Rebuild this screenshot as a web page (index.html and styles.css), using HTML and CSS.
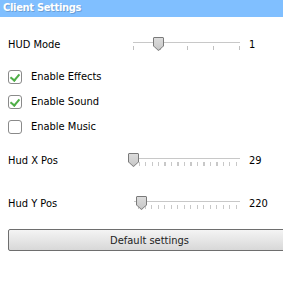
FILE: index.html
```html
<!DOCTYPE html>
<html lang="en">
<head>
    <meta charset="UTF-8">
    <title>Client Settings</title>
    <link rel="stylesheet" href="styles.css">
</head>
<body>
    <div id="window">
        <header class="titleBar">Client Settings</header>

        <main class="panel">
            <div class="sliderRow hudMode">
                <span class="label">HUD Mode</span>
                <div class="slider coarse">
                    <div class="track"></div>
                    <div class="ticks"></div>
                    <div class="thumb" style="left: 20px"></div>
                </div>
                <span class="value">1</span>
            </div>

            <label class="checkRow">
                <span class="box checked"></span>
                <span>Enable Effects</span>
            </label>
            <label class="checkRow">
                <span class="box checked"></span>
                <span>Enable Sound</span>
            </label>
            <label class="checkRow">
                <span class="box"></span>
                <span>Enable Music</span>
            </label>

            <div class="sliderRow hudX">
                <span class="label">Hud X Pos</span>
                <div class="slider fine">
                    <div class="track"></div>
                    <div class="ticks"></div>
                    <div class="thumb" style="left: 0px"></div>
                </div>
                <span class="value">29</span>
            </div>

            <div class="sliderRow hudY">
                <span class="label">Hud Y Pos</span>
                <div class="slider fine">
                    <div class="track"></div>
                    <div class="ticks"></div>
                    <div class="thumb" style="left: 2px"></div>
                </div>
                <span class="value">220</span>
            </div>

            <button class="defaultButton">Default settings</button>
        </main>
    </div>
</body>
</html>
```

FILE: styles.css
```css
* {
    box-sizing: border-box;
}
body {
    margin: 0;
    overflow: hidden;
    background-color: #ffffff;
    font-family: "DejaVu Sans Condensed", "DejaVu Sans", sans-serif;
    font-size: 11px;
    color: #000000;
}
#window {
    width: 283px;
    overflow: hidden;
}

.titleBar {
    height: 17px;
    padding-left: 3px;
    line-height: 16px;
    background-color: #80bfff;
    color: #ffffff;
    font-weight: bold;
    font-size: 11px;
    letter-spacing: -0.3px;
    text-shadow: 1px 1px 0 #6b9fd6;
}

.panel {
    padding: 0 8px;
    width: 300px;
}

.sliderRow {
    display: flex;
    align-items: center;
    height: 20px;
}
.sliderRow .label {
    width: 120px;
    flex-shrink: 0;
}
.sliderRow .value {
    margin-left: 9px;
}
.hudMode {
    margin-top: 17px;
}
.hudX {
    margin-top: 11px;
}
.hudY {
    margin-top: 23px;
}
.hudMode .slider {
    margin-left: 5px;
    width: 107px;
}
.hudX .slider {
    width: 112px;
}
.hudY .slider {
    margin-left: 6px;
    width: 106px;
}

.slider {
    position: relative;
    height: 14px;
}
.slider .track {
    position: absolute;
    left: 0;
    right: 0;
    top: 5px;
    height: 1px;
    background-color: #c8c8c8;
}
.slider .ticks {
    position: absolute;
    left: 0;
    right: 0;
    top: 9px;
    height: 4px;
}
.coarse .ticks {
    background:
        linear-gradient(#c0c0c0, #c0c0c0) 0 0 / 1px 4px no-repeat,
        linear-gradient(#c0c0c0, #c0c0c0) 25.5% 0 / 1px 4px no-repeat,
        linear-gradient(#c0c0c0, #c0c0c0) 50.5% 0 / 1px 4px no-repeat,
        linear-gradient(#c0c0c0, #c0c0c0) 75.5% 0 / 1px 4px no-repeat,
        linear-gradient(#c0c0c0, #c0c0c0) 100% 0 / 1px 4px no-repeat;
}
.fine .ticks {
    left: 4px;
    background: repeating-linear-gradient(to right, #c8c8c8 0, #c8c8c8 1px, transparent 1px, transparent 6.5px);
}
.slider .thumb {
    position: absolute;
    top: 0;
    width: 11px;
    height: 14px;
    background-color: #7a7a7a;
    clip-path: polygon(1px 0, 10px 0, 11px 1px, 11px 9px, 5.5px 14px, 0 9px, 0 1px);
}
.slider .thumb::after {
    content: "";
    position: absolute;
    left: 1px;
    top: 1px;
    width: 9px;
    height: 12px;
    background: linear-gradient(#dcdcdc, #c8c8c8);
    clip-path: polygon(0 0, 9px 0, 9px 8px, 4.5px 12px, 0 8px);
}

.checkRow {
    display: flex;
    align-items: center;
    height: 25px;
}
.checkRow:first-of-type {
    margin-top: 10px;
}
.box {
    width: 14px;
    height: 14px;
    margin-right: 9px;
    border: 1px solid #8a8a8a;
    border-radius: 3px;
    background: #ffffff;
    position: relative;
}
.box.checked::after {
    content: "";
    position: absolute;
    left: 3px;
    top: 1px;
    width: 4px;
    height: 7px;
    border-right: 2.5px solid #4fae47;
    border-bottom: 2.5px solid #4fae47;
    transform: rotate(40deg);
}

.defaultButton {
    display: block;
    margin-top: 16px;
    width: 283px;
    height: 22px;
    padding: 0;
    border: 1px solid #6e6e6e;
    border-radius: 2px;
    background: linear-gradient(#f4f4f4, #e6e6e6 50%, #d8d8d8);
    font-family: "DejaVu Sans Condensed", "DejaVu Sans", sans-serif;
    font-size: 11px;
    color: #222222;
}
```
